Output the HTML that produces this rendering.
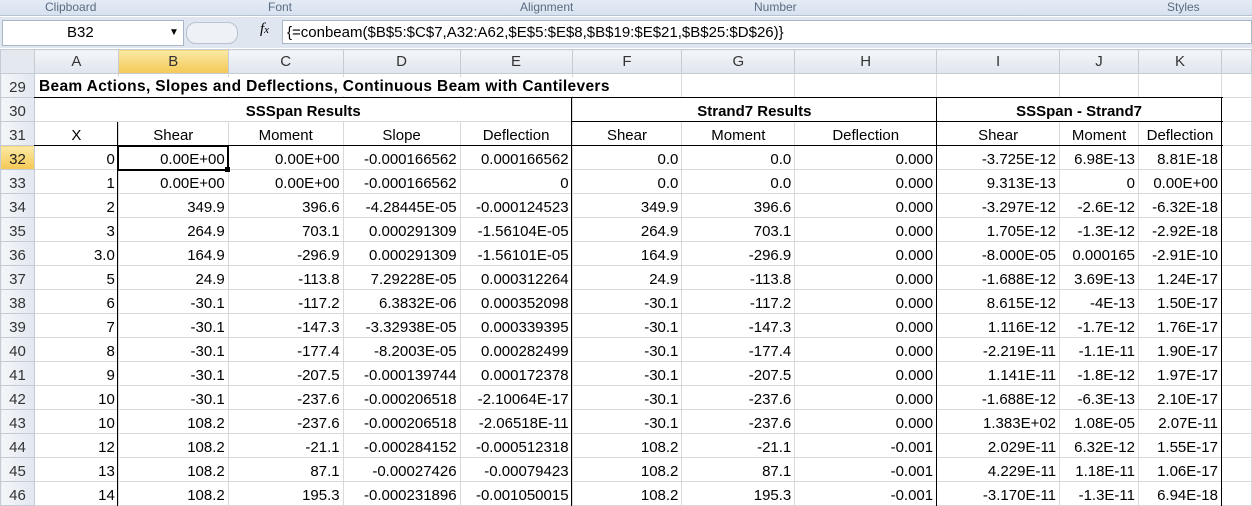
<!DOCTYPE html>
<html><head><meta charset="utf-8"><style>
body{margin:0;width:1252px;height:506px;overflow:hidden;background:#fff;font-family:"Liberation Sans",sans-serif;position:relative}
.rib{position:absolute;top:0;left:0;width:1252px;height:15px;background:linear-gradient(#e4ebf5,#d8e2ef);border-bottom:1px solid #b6c3d4;font-size:12px;color:#5b6b80}
.rib span{position:absolute;top:0}
.fb{position:absolute;top:17px;left:0;width:1252px;height:31px;background:#dfe6ef}
.nb{position:absolute;top:20px;left:2px;width:180px;height:24px;background:#fff;border:1px solid #a9b7c9;font-size:15px;line-height:24px}
.fx{position:absolute;top:20px;left:282px;width:970px;height:24px;background:#fff;border:1px solid #a9b7c9;font-size:15px;line-height:24px;padding-left:4px;box-sizing:border-box}
table{position:absolute;top:49px;left:0;border-collapse:collapse;table-layout:fixed;font-size:15px}
td{height:23px;padding:0 3px;border:1px solid #d9d9d9;white-space:nowrap;overflow:visible;text-align:right;line-height:19px;vertical-align:bottom}
tr.h td{background:linear-gradient(#f4f6f9,#dfe5ee);text-align:center;color:#333;border-color:#c5ccd6;vertical-align:middle;line-height:23px}
td.r{background:linear-gradient(90deg,#f4f6f9,#e2e8f0);text-align:center;color:#333;border-color:#c5ccd6;padding:0}
td.sel{background:linear-gradient(#fbe9a5,#f4c854)!important;color:#222}
.c{text-align:center}.b{font-weight:bold}.l{text-align:left}
.k{position:absolute;background:#000}
</style></head><body>
<div class="rib"><span style="left:45px">Clipboard</span><span style="left:268px">Font</span><span style="left:520px">Alignment</span><span style="left:754px">Number</span><span style="left:1167px">Styles</span></div>
<div class="fb"></div>
<div class="nb"><span style="position:absolute;left:64px">B32</span><span style="position:absolute;left:166px;font-size:10px">▼</span></div>
<div style="position:absolute;top:22px;left:186px;width:50px;height:20px;border:1px solid #b8c2d0;border-radius:10px;background:#eef1f5"></div>
<div style="position:absolute;top:21px;left:260px;font-style:italic;font-family:'Liberation Serif',serif;font-size:15px">f<span style="font-size:11px">x</span></div>
<div class="fx">{=conbeam($B$5:$C$7,A32:A62,$E$5:$E$8,$B$19:$E$21,$B$25:$D$26)}</div>
<table>
<colgroup><col style="width:34px"><col style="width:84px"><col style="width:110px"><col style="width:115px"><col style="width:117px"><col style="width:112px"><col style="width:110px"><col style="width:113px"><col style="width:142px"><col style="width:123px"><col style="width:79px"><col style="width:83px"><col style="width:30px"></colgroup>
<tr class="h"><td style="background:#e4e9f0"></td><td>A</td><td class="sel">B</td><td>C</td><td>D</td><td>E</td><td>F</td><td>G</td><td>H</td><td>I</td><td>J</td><td>K</td><td></td></tr>
<tr><td class="r">29</td><td class="l b" style="position:relative"><span style="position:absolute;left:4px;bottom:1px;background:#fff;padding-right:4px;font-size:15.5px;letter-spacing:0.35px;z-index:2">Beam Actions, Slopes and Deflections, Continuous Beam with Cantilevers</span></td><td></td><td></td><td></td><td></td><td></td><td></td><td></td><td></td><td></td><td></td><td></td></tr>
<tr><td class="r">30</td><td colspan="5" class="c b">SSSpan Results</td><td colspan="3" class="c b">Strand7 Results</td><td colspan="3" class="c b">SSSpan - Strand7</td><td></td></tr>
<tr class="x"><td class="r">31</td><td class="c">X</td><td class="c">Shear</td><td class="c">Moment</td><td class="c">Slope</td><td class="c">Deflection</td><td class="c">Shear</td><td class="c">Moment</td><td class="c">Deflection</td><td class="c">Shear</td><td class="c">Moment</td><td class="c">Deflection</td><td></td></tr>
<tr><td class="r sel">32</td><td>0</td><td>0.00E+00</td><td>0.00E+00</td><td>-0.000166562</td><td>0.000166562</td><td>0.0</td><td>0.0</td><td>0.000</td><td>-3.725E-12</td><td>6.98E-13</td><td>8.81E-18</td><td></td></tr>
<tr><td class="r">33</td><td>1</td><td>0.00E+00</td><td>0.00E+00</td><td>-0.000166562</td><td>0</td><td>0.0</td><td>0.0</td><td>0.000</td><td>9.313E-13</td><td>0</td><td>0.00E+00</td><td></td></tr>
<tr><td class="r">34</td><td>2</td><td>349.9</td><td>396.6</td><td>-4.28445E-05</td><td>-0.000124523</td><td>349.9</td><td>396.6</td><td>0.000</td><td>-3.297E-12</td><td>-2.6E-12</td><td>-6.32E-18</td><td></td></tr>
<tr><td class="r">35</td><td>3</td><td>264.9</td><td>703.1</td><td>0.000291309</td><td>-1.56104E-05</td><td>264.9</td><td>703.1</td><td>0.000</td><td>1.705E-12</td><td>-1.3E-12</td><td>-2.92E-18</td><td></td></tr>
<tr><td class="r">36</td><td>3.0</td><td>164.9</td><td>-296.9</td><td>0.000291309</td><td>-1.56101E-05</td><td>164.9</td><td>-296.9</td><td>0.000</td><td>-8.000E-05</td><td>0.000165</td><td>-2.91E-10</td><td></td></tr>
<tr><td class="r">37</td><td>5</td><td>24.9</td><td>-113.8</td><td>7.29228E-05</td><td>0.000312264</td><td>24.9</td><td>-113.8</td><td>0.000</td><td>-1.688E-12</td><td>3.69E-13</td><td>1.24E-17</td><td></td></tr>
<tr><td class="r">38</td><td>6</td><td>-30.1</td><td>-117.2</td><td>6.3832E-06</td><td>0.000352098</td><td>-30.1</td><td>-117.2</td><td>0.000</td><td>8.615E-12</td><td>-4E-13</td><td>1.50E-17</td><td></td></tr>
<tr><td class="r">39</td><td>7</td><td>-30.1</td><td>-147.3</td><td>-3.32938E-05</td><td>0.000339395</td><td>-30.1</td><td>-147.3</td><td>0.000</td><td>1.116E-12</td><td>-1.7E-12</td><td>1.76E-17</td><td></td></tr>
<tr><td class="r">40</td><td>8</td><td>-30.1</td><td>-177.4</td><td>-8.2003E-05</td><td>0.000282499</td><td>-30.1</td><td>-177.4</td><td>0.000</td><td>-2.219E-11</td><td>-1.1E-11</td><td>1.90E-17</td><td></td></tr>
<tr><td class="r">41</td><td>9</td><td>-30.1</td><td>-207.5</td><td>-0.000139744</td><td>0.000172378</td><td>-30.1</td><td>-207.5</td><td>0.000</td><td>1.141E-11</td><td>-1.8E-12</td><td>1.97E-17</td><td></td></tr>
<tr><td class="r">42</td><td>10</td><td>-30.1</td><td>-237.6</td><td>-0.000206518</td><td>-2.10064E-17</td><td>-30.1</td><td>-237.6</td><td>0.000</td><td>-1.688E-12</td><td>-6.3E-13</td><td>2.10E-17</td><td></td></tr>
<tr><td class="r">43</td><td>10</td><td>108.2</td><td>-237.6</td><td>-0.000206518</td><td>-2.06518E-11</td><td>-30.1</td><td>-237.6</td><td>0.000</td><td>1.383E+02</td><td>1.08E-05</td><td>2.07E-11</td><td></td></tr>
<tr><td class="r">44</td><td>12</td><td>108.2</td><td>-21.1</td><td>-0.000284152</td><td>-0.000512318</td><td>108.2</td><td>-21.1</td><td>-0.001</td><td>2.029E-11</td><td>6.32E-12</td><td>1.55E-17</td><td></td></tr>
<tr><td class="r">45</td><td>13</td><td>108.2</td><td>87.1</td><td>-0.00027426</td><td>-0.00079423</td><td>108.2</td><td>87.1</td><td>-0.001</td><td>4.229E-11</td><td>1.18E-11</td><td>1.06E-17</td><td></td></tr>
<tr><td class="r">46</td><td>14</td><td>108.2</td><td>195.3</td><td>-0.000231896</td><td>-0.001050015</td><td>108.2</td><td>195.3</td><td>-0.001</td><td>-3.170E-11</td><td>-1.3E-11</td><td>6.94E-18</td><td></td></tr>
</table>
<div class="k" style="left:34px;top:97px;width:1189px;height:1px"></div>
<div class="k" style="left:572px;top:121px;width:651px;height:1px"></div>
<div class="k" style="left:34px;top:145px;width:1189px;height:1px"></div>
<div class="k" style="left:117px;top:122px;width:1px;height:384px"></div>
<div class="k" style="left:571px;top:97px;width:1px;height:409px"></div>
<div class="k" style="left:936px;top:97px;width:1px;height:409px"></div>
<div class="k" style="left:1221px;top:97px;width:1px;height:409px"></div>
<div style="position:absolute;left:117px;top:145px;width:108px;height:22px;border:2px solid #000"></div>
<div class="k" style="left:225px;top:167px;width:5px;height:5px"></div>
</body></html>
